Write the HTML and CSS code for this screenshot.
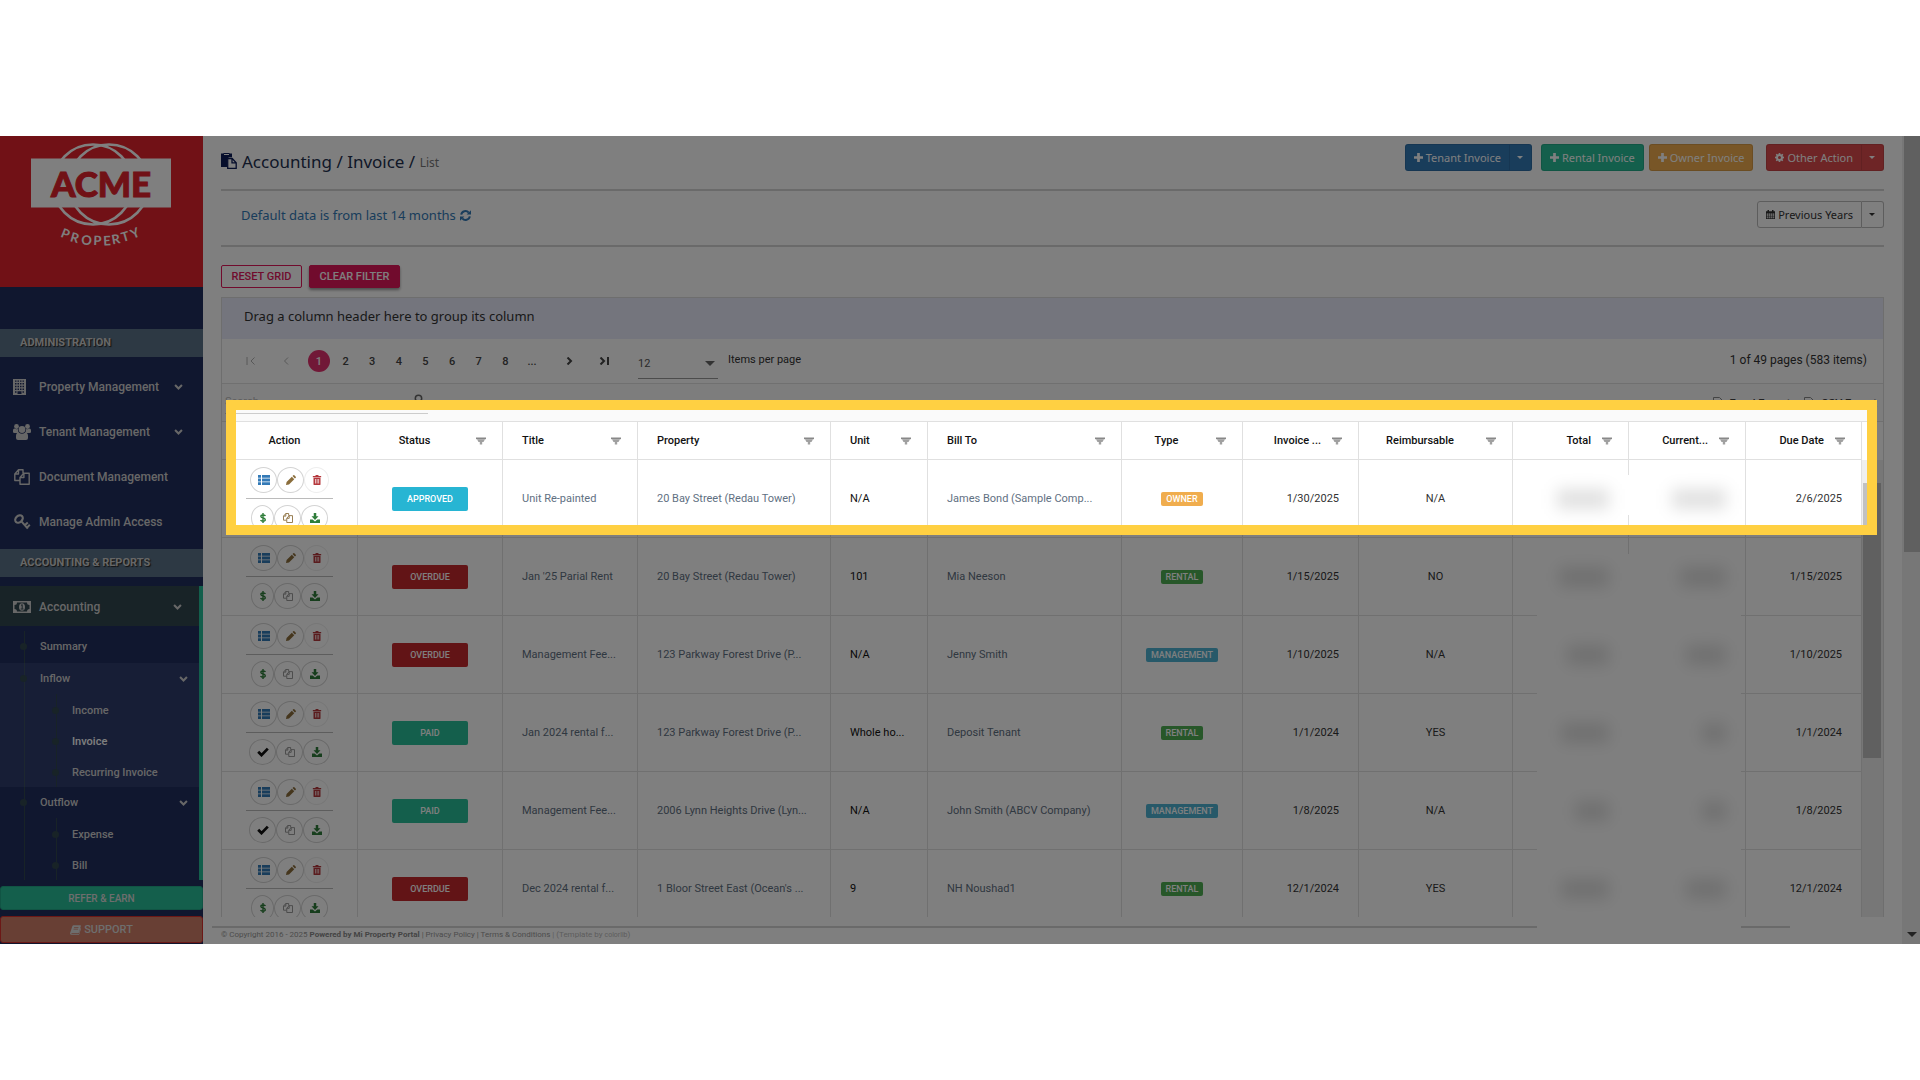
FILE: index.html
```html
<!DOCTYPE html>
<html lang="en">
<head>
    <meta charset="UTF-8">
    <meta name="viewport" content="width=device-width, initial-scale=1.0">
    <title>Accounting / Invoice</title>
    <link rel="stylesheet" href="styles.css">
</head>
<body>
    <!-- icon set -->
    <svg class="sprite" aria-hidden="true">
        <symbol id="i-building" viewBox="0 0 13 16"><path fill-rule="evenodd" d="M0 0h13v16H0zM2 1.500v1.300h1.500V1.500zm2.500 0v1.300H6V1.500zm2.500 0v1.300h1.500V1.500zm2.500 0v1.300H11V1.500zM2 4v1.500h1.500V4zm2.500 0v1.500H6V4zM7 4v1.500h1.500V4zm2.500 0v1.500H11V4zM2 6.700v1.500h1.500V6.700zm2.500 0v1.500H6V6.700zm2.500 0v1.500h1.500V6.700zm2.500 0v1.500H11V6.700zM2 9.500V11h1.500V9.500zm2.500 0V11H6V9.500zm2.500 0V11h1.500V9.500zm2.500 0V11H11V9.500zM2 12.300v1.500h1.500v-1.500zm2.500 0V15h4v-2.700zm5 0v1.500H11v-1.500z"/></symbol>
        <symbol id="i-users" viewBox="0 0 18 16"><circle cx="3.500" cy="2.500" r="2.400"/><circle cx="14.500" cy="2.500" r="2.400"/><path d="M0 8V6.500Q0 4.600 1.500 4.600q2 1 3.500.3Q4.600 7.500 6 9H1.500Q0 9 0 8zM18 8V6.500q0-1.900-1.500-1.900-2 1-3.500.3.400 2.600-1 4.100h4.500Q18 9 18 8z"/><circle cx="9" cy="5.500" r="3.400"/><path d="M3 14v-2q0-3.600 2.800-3.600Q9 11 12.200 8.400 15 8.400 15 12v2q0 2-2 2H5q-2 0-2-2z"/></symbol>
        <symbol id="i-copy" viewBox="0 0 16 16"><path fill="none" stroke="currentColor" stroke-width="1.400" stroke-linejoin="round" d="M5.500 11.500H.8V5L4.500.8H9v3.400M4.500.8V5H.8M6 15.200V8.500l3.700-4.300h5.500v11zM9.900 4.200v4.300H6"/></symbol>
        <symbol id="i-key" viewBox="0 0 16 16"><ellipse cx="5" cy="5" rx="3.200" ry="4.200" transform="rotate(45 5 5)" fill="none" stroke="currentColor" stroke-width="2.200"/><path fill="none" stroke="currentColor" stroke-width="2" d="M7.200 7.200l6.600 7.400M11 11l2.800-2.600M13 13.600l2.800-2.800"/></symbol>
        <symbol id="i-money" viewBox="0 0 18 12"><path fill-rule="evenodd" d="M0 0h18v12H0zM4 1.500A2.500 2.500 0 0 1 1.500 4v4A2.500 2.500 0 0 1 4 10.500h10A2.500 2.500 0 0 1 16.500 8V4A2.500 2.500 0 0 1 14 1.500z"/><ellipse cx="9" cy="6" rx="3" ry="3.800"/><path class="knock" d="M8 4.500L9.200 3.600v4.200M7.700 8h2.800"/></symbol>
        <symbol id="i-chevron" viewBox="0 0 10 7"><path fill="none" stroke="currentColor" stroke-width="2.400" d="M1 1.200l4 4 4-4"/></symbol>
        <symbol id="i-book" viewBox="0 0 16 14"><path fill-rule="evenodd" d="M5 0h10q1.200 0 .8 1.300L13 10.700q-.3 1-1.300 1H2.200q-.6.800.4 1h10.200L15.300 4q1 .3.600 1.500L13.500 13q-.4 1-1.400 1H2.200Q0 14 0 11.700L3.500 1.200Q4 0 5 0zM6 3l-.3 1h6.500l.3-1zM5.300 5.300L5 6.300h6.500l.3-1z"/></symbol>
        <symbol id="i-clipboard" viewBox="0 0 16 16"><path fill-rule="evenodd" d="M0 .5h2.500V0h6v.500H11v3.700H8L6 6v8H0zM3 1v1h5V1z"/><path fill="none" stroke="currentColor" stroke-width="1.300" d="M6.700 15.300V5.500h4.500l4 4.200v5.600zM11 5.500v4.400h4.200"/></symbol>
        <symbol id="i-refresh" viewBox="0 0 12 12"><path fill="none" stroke="currentColor" stroke-width="2.200" d="M1.300 5A4.700 4.700 0 0 1 9.500 2.800M10.700 7a4.700 4.700 0 0 1-8.200 2.200"/><path d="M12 .3v4.700H7.200zM0 11.700V7h4.800z"/></symbol>
        <symbol id="i-plus" viewBox="0 0 10 10"><path d="M3.500 0h3v3.500H10v3H6.500V10h-3V6.500H0v-3h3.500z"/></symbol>
        <symbol id="i-cog" viewBox="0 0 12 12"><path fill-rule="evenodd" d="M5 0h2l.3 1.700 1 .4L9.800 1l1.300 1.300-1 1.500.4 1L12 5v2l-1.600.3-.4 1 1 1.400L9.700 11l-1.500-1-1 .4L7 12H5l-.3-1.600-1-.4-1.400 1L1 9.700l1-1.500-.4-1L0 7V5l1.700-.3.300-1L1 2.300 2.300 1l1.400 1 1-.4zM6 4a2 2 0 1 0 0 4 2 2 0 0 0 0-4z"/></symbol>
        <symbol id="i-calendar" viewBox="0 0 12 12"><path fill-rule="evenodd" d="M0 1.500h2V0h2v1.500h4V0h2v1.500h2V12H0zM1 4.500v1.700h2V4.500zm2.700 0v1.700h2V4.500zm2.700 0v1.700h2V4.500zm2.700 0v1.700H11V4.500zM1 7v1.700h2V7zm2.700 0v1.700h2V7zm2.700 0v1.700h2V7zm2.700 0v1.700H11V7zM1 9.500V11h2V9.500zm2.700 0V11h2V9.500zm2.700 0V11h2V9.500zm2.700 0V11H11V9.500z"/></symbol>
        <symbol id="i-caret" viewBox="0 0 8 4"><path d="M0 0h8L4 4z"/></symbol>
        <symbol id="i-filter" viewBox="0 0 10 8"><path d="M0 .5h10v1.700H0z"/><path opacity=".8" d="M1 2.200h8L7.500 5H6.200v2.500H3.800V5H2.500z"/></symbol>
        <symbol id="i-search" viewBox="0 0 10 12"><circle cx="4.500" cy="4.500" r="3.200" fill="none" stroke="currentColor" stroke-width="1.500"/><path fill="none" stroke="currentColor" stroke-width="1.500" d="M6.500 7l3 4"/></symbol>
        <symbol id="i-file" viewBox="0 0 10 12"><path fill="none" stroke="currentColor" d="M.5.500h6l3 3v8h-9zM2.500 5h5M2.500 8h5"/></symbol>
        <symbol id="i-list" viewBox="0 0 12 10"><path d="M0 0h3v2.800H0zM4 0h8v2.800H4zM0 3.600h3v2.800H0zM4 3.600h8v2.800H4zM0 7.200h3V10H0zM4 7.200h8V10H4z"/></symbol>
        <symbol id="i-pencil" viewBox="0 0 12 12"><path d="M0 12l.7-3.600L7 2.100 9.900 5l-6.300 6.300zM7.800 1.300l1-1q.6-.5 1.200 0l1.700 1.700q.5.600 0 1.200l-1 1z"/></symbol>
        <symbol id="i-trash" viewBox="0 0 10 12"><path fill-rule="evenodd" d="M3 1.200L3.500 0h3L7 1.200h3v1.400H0V1.200zM.8 3.200h8.400V11q0 1-1 1H1.800q-1 0-1-1zM2.700 4.700v5.500h.8V4.700zm2 0v5.500h.8V4.700zm2 0v5.500h.8V4.700z"/></symbol>
        <symbol id="i-dollar" viewBox="0 0 8 12"><path fill="none" stroke="currentColor" stroke-width="1.700" d="M7 3.500Q6 2.300 4 2.300 1.400 2.300 1.400 4T4 6t2.700 2T4 9.800Q2 9.800 1 8.500M4 0v12"/></symbol>
        <symbol id="i-download" viewBox="0 0 12 12"><path d="M4.500 0h3v4h2.700L6 8.300 1.800 4h2.700zM0 7.800h3.200L6 10.300l2.800-2.500H12V12H0z"/></symbol>
        <symbol id="i-check" viewBox="0 0 12 10"><path fill="none" stroke="currentColor" stroke-width="2.800" d="M1.200 4.800l3.300 3.300 6.300-6.500"/></symbol>
    </svg>

    <div class="app">
        <aside class="sidebar">
            <div class="brand">
                <svg class="logo" viewBox="0 0 203 150" role="img" aria-label="Acme Property">
                    <g fill="none" stroke="#fff" stroke-width="2.600"><circle cx="93" cy="48" r="40"/><circle cx="109" cy="48" r="40"/></g>
                    <path fill="#fff" d="M31 22h140v49H31z"/>
                    <text class="logo-name" x="101" y="60" text-anchor="middle">ACME</text>
                    <text class="logo-sub" x="60 69.500 80.800 93.200 103.500 112.500 122.800 133" y="100 104.500 107.600 108.500 109 108 105.500 102.500" rotate="22 16 8 2 -3 -10 -16 -24">PROPERTY</text>
                </svg>
            </div>
            <h2 class="side-title">ADMINISTRATION</h2>
            <nav class="side-nav">
                <a href="#"><svg class="ico-side building"><use href="#i-building"/></svg>Property Management<svg class="chev"><use href="#i-chevron"/></svg></a>
                <a href="#"><svg class="ico-side"><use href="#i-users"/></svg>Tenant Management<svg class="chev"><use href="#i-chevron"/></svg></a>
                <a href="#"><svg class="ico-side"><use href="#i-copy"/></svg>Document Management</a>
                <a href="#"><svg class="ico-side"><use href="#i-key"/></svg>Manage Admin Access</a>
            </nav>
            <h2 class="side-title">ACCOUNTING &amp; REPORTS</h2>
            <nav class="side-open">
                <a class="side-parent" href="#"><svg class="ico-side money"><use href="#i-money"/></svg>Accounting<svg class="chev"><use href="#i-chevron"/></svg></a>
                <ul class="tree">
                    <li><a class="summary" href="#">Summary</a></li>
                    <li class="current">
                        <a href="#">Inflow<svg class="chev"><use href="#i-chevron"/></svg></a>
                        <ul>
                            <li><a href="#">Income</a></li>
                            <li><a class="active" href="#">Invoice</a></li>
                            <li><a href="#">Recurring Invoice</a></li>
                        </ul>
                    </li>
                    <li>
                        <a href="#">Outflow<svg class="chev"><use href="#i-chevron"/></svg></a>
                        <ul>
                            <li><a href="#">Expense</a></li>
                            <li><a href="#">Bill</a></li>
                        </ul>
                    </li>
                </ul>
            </nav>
            <button type="button" class="refer">REFER &amp; EARN</button>
            <button type="button" class="support"><svg><use href="#i-book"/></svg>SUPPORT</button>
        </aside>

        <main class="main">
            <header class="page-head">
                <h1><svg><use href="#i-clipboard"/></svg>Accounting / Invoice / <small>List</small></h1>
                <div class="head-actions">
                    <div class="split blue">
                        <button type="button"><svg><use href="#i-plus"/></svg>Tenant Invoice</button>
                        <button type="button" class="toggle" aria-label="More tenant invoice actions"><svg><use href="#i-caret"/></svg></button>
                    </div>
                    <div class="split green"><button type="button"><svg><use href="#i-plus"/></svg>Rental Invoice</button></div>
                    <div class="split orange"><button type="button"><svg><use href="#i-plus"/></svg>Owner Invoice</button></div>
                    <div class="split red">
                        <button type="button"><svg><use href="#i-cog"/></svg>Other Action</button>
                        <button type="button" class="toggle" aria-label="More actions"><svg><use href="#i-caret"/></svg></button>
                    </div>
                </div>
            </header>
            <div class="period">
                <a href="#">Default data is from last 14 months <svg><use href="#i-refresh"/></svg></a>
                <div class="split plain">
                    <button type="button"><svg><use href="#i-calendar"/></svg>Previous Years</button>
                    <button type="button" class="toggle" aria-label="Choose year"><svg><use href="#i-caret"/></svg></button>
                </div>
            </div>
            <div class="grid-buttons">
                <button type="button" class="reset">RESET GRID</button>
                <button type="button" class="clear">CLEAR FILTER</button>
            </div>

            <section class="grid">
                <div class="group-drop">Drag a column header here to group its column</div>
                <div class="pager">
                    <button type="button" class="nav off" aria-label="First page"><svg viewBox="0 0 10 8"><path d="M1 0v8M8.500.5L5 4l3.500 3.500"/></svg></button>
                    <button type="button" class="nav off" aria-label="Previous page"><svg viewBox="0 0 10 8"><path d="M7 .5L3.500 4 7 7.500"/></svg></button>
                    <div class="pages">
                        <button type="button" class="on">1</button>
                        <button type="button">2</button>
                        <button type="button">3</button>
                        <button type="button">4</button>
                        <button type="button">5</button>
                        <button type="button">6</button>
                        <button type="button">7</button>
                        <button type="button">8</button>
                        <button type="button">...</button>
                    </div>
                    <button type="button" class="nav" aria-label="Next page"><svg viewBox="0 0 10 8"><path d="M3.500.5L7 4 3.500 7.500"/></svg></button>
                    <button type="button" class="nav" aria-label="Last page"><svg viewBox="0 0 10 8"><path d="M1.500.5L5 4 1.500 7.500M9 0v8"/></svg></button>
                    <div class="size-wrap">
                        <select id="pageSize"><option>12</option><option>24</option></select>
                        <svg><use href="#i-caret"/></svg>
                    </div>
                    <label for="pageSize">Items per page</label>
                    <span class="page-info">1 of 49 pages (583 items)</span>
                </div>
                <div class="toolbar">
                    <div class="search">
                        <input type="text" placeholder="Search" aria-label="Search">
                        <svg><use href="#i-search"/></svg>
                    </div>
                    <button type="button"><svg><use href="#i-file"/></svg>Excel Export</button>
                    <button type="button"><svg><use href="#i-file"/></svg>CSV Export</button>
                </div>
                <div class="grid-view">
                    <table>
                        <colgroup>
                            <col class="c-action"><col class="c-status"><col class="c-title"><col class="c-property"><col class="c-unit"><col class="c-bill">
                            <col class="c-type"><col class="c-date"><col class="c-reimb"><col class="c-date"><col class="c-current"><col class="c-date">
                        </colgroup>
                        <thead><tr id="gridHead"></tr></thead>
                        <tbody id="gridBody"></tbody>
                    </table>
                    <div class="scroll"><div class="thumb"></div></div>
                </div>
                <div class="mask mask-first"></div>
                <div class="mask mask-rest"></div>
            </section>
            <footer class="foot">© Copyright 2016 - 2025 <b>Powered by Mi Property Portal</b> | <a href="#">Privacy Policy</a> | <a href="#">Terms &amp; Conditions</a> <span>| (Template by <small>colorlib</small>)</span></footer>
        </main>
        <div class="page-scroll"><div class="page-thumb"></div><svg><use href="#i-caret"/></svg></div>
        <div class="spotlight"></div>
    </div>

    <script>
        var columns = [
            ['Action', 'center'], ['Status', 'center'], ['Title', ''], ['Property', ''],
            ['Unit', ''], ['Bill To', ''], ['Type', 'center'], ['Invoice ...', 'right'],
            ['Reimbursable', 'center'], ['Total', 'right'], ['Current...', 'right'], ['Due Date', 'right']
        ];

        var invoices = [
            ['approved', 'Unit Re-painted', '20 Bay Street (Redau Tower)', 'N/A', 'James Bond (Sample Comp...', 'owner', '1/30/2025', 'N/A', 52, 54, '2/6/2025'],
            ['overdue', "Jan '25 Parial Rent", '20 Bay Street (Redau Tower)', '101', 'Mia Neeson', 'rental', '1/15/2025', 'NO', 50, 46, '1/15/2025'],
            ['overdue', 'Management Fee...', '123 Parkway Forest Drive (P...', 'N/A', 'Jenny Smith', 'management', '1/10/2025', 'N/A', 42, 40, '1/10/2025'],
            ['paid', 'Jan 2024 rental f...', '123 Parkway Forest Drive (P...', 'Whole ho...', 'Deposit Tenant', 'rental', '1/1/2024', 'YES', 48, 24, '1/1/2024'],
            ['paid', 'Management Fee...', '2006 Lynn Heights Drive (Lyn...', 'N/A', 'John Smith (ABCV Company)', 'management', '1/8/2025', 'N/A', 34, 24, '1/8/2025'],
            ['overdue', 'Dec 2024 rental f...', "1 Bloor Street East (Ocean's ...", '9', 'NH Noushad1', 'rental', '12/1/2024', 'YES', 48, 40, '12/1/2024']
        ];

        function icon(name) {
            return '<svg><use href="#i-' + name + '"/></svg>';
        }

        function action(name, label) {
            return '<button type="button" class="act ' + name + '" aria-label="' + label + '">' + icon(name) + '</button>';
        }

        document.getElementById('gridHead').innerHTML = columns.map(function (col) {
            var filter = col[0] === 'Action' ? '' : icon('filter');
            return '<th class="' + col[1] + '"><div class="th">' + '<span>' + col[0] + '</span>' + filter + '</div></th>';
        }).join('');

        document.getElementById('gridBody').innerHTML = invoices.map(function (r) {
            var pay = r[0] === 'paid' ? action('check', 'Paid') : action('dollar', 'Pay');
            return '<tr>' +
                '<td class="actions"><div>' + action('list', 'View') + action('pencil', 'Edit') + action('trash', 'Delete') + '</div><hr>' +
                '<div>' + pay + action('copy', 'Copy') + action('download', 'Download') + '</div></td>' +
                '<td class="center"><button type="button" class="status ' + r[0] + '">' + r[0].toUpperCase() + '</button></td>' +
                '<td><a href="#">' + r[1] + '</a></td>' +
                '<td><a href="#">' + r[2] + '</a></td>' +
                '<td class="dark">' + r[3] + '</td>' +
                '<td><a href="#">' + r[4] + '</a></td>' +
                '<td class="center"><span class="tag ' + r[5] + '">' + r[5].toUpperCase() + '</span></td>' +
                '<td class="right">' + r[6] + '</td>' +
                '<td class="center">' + r[7] + '</td>' +
                '<td class="right"><span class="hidden-sum" style="width:' + r[8] + 'px"></span></td>' +
                '<td class="right"><span class="hidden-sum" style="width:' + r[9] + 'px"></span></td>' +
                '<td class="right">' + r[10] + '</td>' +
                '</tr>';
        }).join('');
    </script>
</body>
</html>
```
FILE: styles.css
```css
* {
    box-sizing: border-box;
}

body {
    margin: 0;
    min-height: 100vh;
    display: flex;
    flex-direction: column;
    justify-content: center;
    background-color: #fff;
    font-family: Roboto, sans-serif;
    font-size: 12px;
    color: #333;
}

a {
    color: inherit;
    text-decoration: none;
}

button {
    font-family: inherit;
    cursor: pointer;
}

svg {
    fill: currentColor;
    flex: none;
}

.sprite {
    position: absolute;
    width: 0;
    height: 0;
}

.app {
    position: relative;
    display: flex;
    overflow: hidden;
    background-color: #fff;
}

/* sidebar */
.sidebar {
    width: 203px;
    flex: none;
    padding-bottom: 1px;
    background-color: #202e5e;
    color: #cfcfcf;
    font-weight: 500;
}

.brand {
    height: 151px;
    margin-bottom: 42px;
    background-color: #e2222c;
}

.logo {
    display: block;
    width: 203px;
    height: 151px;
}

.logo-name {
    font: 900 35px Lato, sans-serif;
    fill: #e2222c;
    stroke: #e2222c;
    stroke-width: 1px;
}

.logo-sub {
    font: 700 13px Lato, sans-serif;
    fill: #fff;
}

.side-title {
    margin: 0;
    padding-left: 20px;
    font-size: 11px;
    font-weight: 700;
    line-height: 28px;
    background-color: #5a7288;
    text-shadow: 1px 1px 1px #222;
}

.side-nav {
    padding: 7px 0 5px;
}

.side-nav a,
.side-parent {
    display: flex;
    align-items: center;
    height: 45px;
    padding-left: 13px;
}

.ico-side {
    width: 18px;
    height: 16px;
    margin-right: 8px;
}

.ico-side.building {
    width: 13px;
    margin-right: 13px;
}

.ico-side.money {
    height: 12px;
}

.knock {
    fill: none;
    stroke: #30464f;
}

.chev {
    width: 9px;
    height: 6px;
    margin-left: auto;
    margin-right: 20px;
}

.side-open {
    margin-top: 9px;
    border-right: 4px solid #26be98;
}

.side-parent {
    height: 40px;
    padding-top: 2px;
    background-color: #30464f;
}

.side-parent .chev {
    margin-right: 17px;
}

.tree,
.tree ul {
    margin: 0;
    padding: 0;
    list-style: none;
    font-size: 11px;
}

.tree {
    background-image: linear-gradient(#30464f, #30464f);
    background-size: 1px 100%;
    background-position: 24px 5px;
    background-repeat: no-repeat;
}

.tree a {
    display: flex;
    align-items: center;
    height: 31px;
    padding-left: 20px;
}

.tree a::before {
    content: "";
    width: 7px;
    height: 7px;
    margin-right: 13px;
    border-radius: 4px;
    background-color: #30464f;
}

.tree a.summary {
    height: 37px;
    padding-top: 4px;
}

.tree ul {
    background-image: linear-gradient(#30464f, #30464f);
    background-size: 1px 100%;
    background-position: 56px 0;
    background-repeat: no-repeat;
}

.tree ul a {
    padding: 2px 0 0 52px;
}

.tree .chev {
    margin-right: 11px;
}

.tree .current {
    background-color: rgba(88, 104, 150, 0.25);
}

.tree .active {
    color: #fff;
}

.refer,
.support {
    display: flex;
    align-items: center;
    justify-content: center;
    width: 100%;
    border-radius: 3px;
    color: #dcdcdc;
    font-weight: 500;
}

.refer {
    height: 24px;
    margin: 6px 0;
    border: 1px solid #22a888;
    background-color: #28be98;
    font-size: 10px;
}

.support {
    height: 27px;
    border: 1px solid #d9302c;
    background-color: #d07e68;
    font-size: 11px;
    gap: 3px;
}

.support svg {
    width: 11px;
    height: 10px;
}

/* page header */
.main {
    flex: 1;
    min-width: 0;
    padding: 0 18px;
}

.page-head,
.period {
    display: flex;
    justify-content: space-between;
    border-bottom: 2px solid #d4d4d4;
    font-family: "Noto Sans", sans-serif;
}

.page-head {
    height: 55px;
    padding-top: 8px;
}

.page-head h1 {
    display: flex;
    align-items: center;
    height: 34px;
    margin: 0;
    font-size: 17px;
    font-weight: 400;
    white-space: pre;
    color: #23304f;
}

.page-head h1 svg {
    width: 16px;
    height: 16px;
    margin-right: 5px;
    color: #0c1c58;
}

.page-head small {
    font-size: 12px;
    padding-top: 3px;
    color: #777;
}

.head-actions {
    display: flex;
}

.split {
    display: flex;
    height: 27px;
    margin-left: 9px;
}

.split button {
    display: flex;
    align-items: center;
    gap: 3px;
    padding: 0 8px;
    border: 1px solid rgba(0, 0, 0, 0.1);
    border-radius: 3px;
    background: none;
    color: inherit;
    font-size: 11px;
}

.split button:first-child:not(:last-child) {
    border-radius: 3px 0 0 3px;
}

.split button.toggle {
    width: 22px;
    padding: 0 7px;
    border-left: 0;
    border-radius: 0 3px 3px 0;
}

.split svg {
    width: 9px;
    height: 9px;
}

.split .toggle svg {
    width: 6px;
    height: 3px;
}

.blue,
.green,
.orange,
.red {
    color: #fff;
    border-radius: 3px;
}

.blue {
    background-color: #337ab7;
}

.green {
    background-color: #28be98;
}

.orange {
    background-color: #f0ad4e;
    margin-left: 5px;
}

.red {
    background-color: #dc4a4c;
    margin-left: 13px;
}

.period {
    height: 56px;
    padding: 10px 0 0 20px;
}

.period a {
    display: flex;
    align-items: center;
    gap: 4px;
    height: 28px;
    font-size: 13px;
    color: #337ab7;
}

.period a svg {
    width: 11px;
    height: 11px;
}

.plain button {
    border-color: #bbb;
}

.grid-buttons {
    display: flex;
    gap: 7px;
    padding: 18px 0 9px;
}

.grid-buttons button {
    height: 23px;
    padding: 0;
    border: 1px solid #e3165b;
    border-radius: 2px;
    font-size: 11px;
    font-weight: 500;
}

.grid-buttons .reset {
    width: 81px;
    background-color: #fff;
    color: #e3165b;
}

.grid-buttons .clear {
    width: 91px;
    background-color: #e3165b;
    color: #fff;
    box-shadow: 0 2px 3px rgba(0, 0, 0, 0.4);
}

/* grid */
.grid {
    position: relative;
    border: 1px solid #dcdcdc;
    border-bottom: 0;
}

.group-drop {
    height: 41px;
    padding-left: 22px;
    line-height: 37px;
    background-color: #e8eafa;
    font-family: "Noto Sans", sans-serif;
    font-size: 13px;
}

.pager {
    display: flex;
    align-items: center;
    height: 45px;
    padding: 0 16px 0 11px;
    border-bottom: 1px solid #e0e0e0;
}

.pager button {
    display: flex;
    align-items: center;
    justify-content: center;
    padding: 0;
    border: 0;
    background: none;
    font-size: 11px;
    font-weight: 500;
    color: #444;
}

.pager .nav {
    width: 35px;
    height: 22px;
}

.pager .nav svg {
    width: 10px;
    height: 8px;
    fill: none;
    stroke: currentColor;
    stroke-width: 2;
}

.pager .nav.off {
    color: #b0b0b0;
}

.pager .nav.off svg {
    stroke-width: 1;
}

.pages {
    display: flex;
    justify-content: space-between;
    width: 248px;
    padding: 0 8px 0 5px;
}

.pages button {
    width: 22px;
    height: 22px;
    border-radius: 50%;
}

.pages .on {
    background-color: #e3316e;
    color: #fff;
}

.size-wrap {
    display: flex;
    align-items: center;
    width: 80px;
    height: 30px;
    margin: 5px 10px 0 17px;
    border-bottom: 1px solid #999;
}

.size-wrap select {
    flex: 1;
    padding: 0;
    border: 0;
    appearance: none;
    background: none;
    font: 11px Roboto, sans-serif;
    color: #555;
}

.size-wrap svg {
    width: 10px;
    height: 5px;
    margin-right: 3px;
    color: #666;
}

.pager label,
.page-info {
    height: 17px;
    font-size: 11px;
}

.page-info {
    margin-left: auto;
    font-size: 12px;
}

.toolbar {
    display: flex;
    align-items: flex-start;
    height: 38px;
    padding: 8px 6px 0 3px;
    border-bottom: 1px solid #e0e0e0;
    background-color: #fafafa;
}

.search {
    display: flex;
    width: 203px;
    height: 22px;
    margin-right: auto;
    border-bottom: 1px solid #ccc;
}

.search input {
    flex: 1;
    min-width: 0;
    height: 18px;
    padding: 0;
    border: 0;
    background: none;
    font: 11px Roboto, sans-serif;
}

.search input::placeholder {
    color: #bbb;
}

.search svg {
    width: 10px;
    height: 12px;
    margin: 2px 4px 0 0;
    color: #666;
}

.toolbar button {
    display: flex;
    align-items: center;
    gap: 7px;
    height: 22px;
    margin-left: 14px;
    padding: 0;
    border: 0;
    background: none;
    font-size: 11px;
    font-weight: 500;
    color: #444;
}

.toolbar button svg {
    width: 10px;
    height: 12px;
    color: #888;
}

.grid-view {
    display: flex;
    height: 495px;
    overflow: hidden;
}

table {
    flex: 1;
    align-self: flex-start;
    width: 100%;
    min-width: 0;
    table-layout: fixed;
    border-collapse: separate;
    border-spacing: 0;
}

.c-action {
    width: 136px;
}

.c-status {
    width: 145px;
}

.c-title {
    width: 135px;
}

.c-property {
    width: 193px;
}

.c-unit {
    width: 97px;
}

.c-bill {
    width: 194px;
}

.c-type {
    width: 121px;
}

.c-date {
    width: 116px;
}

.c-reimb {
    width: 154px;
}

.c-current {
    width: 117px;
}

th,
td {
    padding: 0 0 0 19px;
    border-right: 1px solid #e0e0e0;
    border-bottom: 1px solid #e0e0e0;
    text-align: left;
    white-space: nowrap;
    overflow: hidden;
}

th {
    height: 38px;
    font-size: 11px;
    font-weight: 500;
    color: #111;
}

.th {
    display: flex;
    align-items: center;
    gap: 11px;
    padding-right: 16px;
}

.th span {
    flex: 1;
}

.th svg {
    width: 10px;
    height: 8px;
    color: #888;
}

th.center,
td.center {
    padding-left: 0;
    text-align: center;
}

th.center {
    padding-left: 6px;
}

.right {
    text-align: right;
}

td {
    height: 78px;
    font-size: 11px;
}

td a {
    color: #5f7082;
}

td.dark {
    color: #111;
}

td.right {
    padding: 0 19px 0 0;
}

.actions {
    padding: 0 24px;
}

.actions div {
    display: flex;
    justify-content: center;
}

.actions hr {
    height: 1px;
    margin: 5px 0 6px;
    border: 0;
    background-color: #bbb;
}

.act {
    display: flex;
    align-items: center;
    justify-content: center;
    width: 27px;
    height: 26px;
    padding: 0;
    border: 1px solid #d4d4d4;
    border-radius: 50%;
    background: none;
    color: #111;
}

.act svg {
    width: 12px;
    height: 10px;
}

.act.list {
    color: #337ab7;
}

.act.pencil {
    color: #8a6d3b;
}

.act.trash {
    width: 25px;
    border-color: #eee;
    color: #b5383d;
}

.act.dollar {
    width: 23px;
    color: #2f7d3a;
}

.act.copy {
    color: #8c8c8c;
}

tr:first-child .act.copy {
    color: #8a6d3b;
}

.act.download {
    color: #2f7d3a;
}

.status {
    width: 76px;
    height: 24px;
    padding: 0;
    border: 0;
    border-radius: 2px;
    color: #fff;
    font-size: 9px;
    font-weight: 500;
}

.approved {
    background-color: #27b5d3;
}

.overdue {
    background-color: #c5282d;
}

.paid {
    background-color: #28be98;
}

.tag {
    display: inline-block;
    padding: 0 5px;
    border-radius: 2px;
    color: #fff;
    font-size: 9px;
    font-weight: 500;
    line-height: 14px;
}

.owner {
    background-color: #f0ad4e;
}

.rental {
    background-color: #4fae53;
}

.management {
    background-color: #4eb3d3;
}

.hidden-sum {
    position: relative;
    z-index: 2;
    display: inline-block;
    height: 20px;
    vertical-align: middle;
    background-color: rgba(0, 0, 0, 0.12);
    filter: blur(8px);
}

.mask {
    position: absolute;
    z-index: 1;
    right: 142px;
    width: 204px;
    background-color: #fff;
}

.mask-first {
    top: 177px;
    height: 40px;
}

.mask-rest {
    top: 256px;
    bottom: -12px;
}

.scroll {
    width: 21px;
    flex: none;
    margin-top: 38px;
    padding: 23px 2px 0 1px;
    background-color: #efefef;
}

.thumb {
    height: 275px;
    background-color: #c1c1c1;
}

.foot {
    height: 17px;
    margin: 9px 94px 0 -9px;
    padding: 2px 9px 0;
    border-top: 2px solid #d4d4d4;
    font-size: 8px;
    color: #999;
}

.foot b {
    color: #888;
}

.foot span {
    color: #bbb;
}

.foot small {
    font-size: 7px;
}

.page-scroll {
    display: flex;
    flex-direction: column;
    justify-content: space-between;
    align-items: center;
    width: 18px;
    flex: none;
    padding: 0 0 7px 2px;
    background-color: #efefef;
}

.page-thumb {
    width: 100%;
    height: 416px;
    background-color: #c1c1c1;
}

.page-scroll svg {
    width: 10px;
    height: 5px;
    color: #444;
}

/* tour highlight, everything around it is dimmed */
.spotlight {
    position: absolute;
    z-index: 3;
    top: 264px;
    left: 226px;
    right: 43px;
    height: 135px;
    border: 10px solid #ffd042;
    box-shadow: 0 0 0 2000px rgba(0, 0, 0, 0.5);
    pointer-events: none;
}
```
